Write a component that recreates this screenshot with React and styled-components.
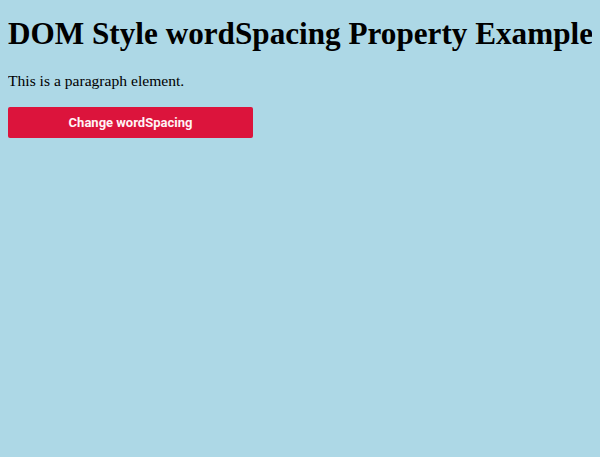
import React from "react";
import styled, { createGlobalStyle } from "styled-components";

const GlobalStyle = createGlobalStyle`
  body {
    margin: 8px;
    background: #add8e6;
    font-family: "Liberation Serif", "Times New Roman", serif;
    color: #000;
  }
`;

const Title = styled.h1`
  font-size: 31.2px;
  font-weight: bold;
  margin: 8px 0 20.4px;
  white-space: nowrap;
`;

const Text = styled.p`
  font-size: 15.6px;
  margin: 0 0 16.3px;
`;

const Button = styled.button`
  display: block;
  width: 245px;
  height: 31px;
  padding: 0;
  border: none;
  border-radius: 2px;
  background: #dc143c;
  color: #fff2f5;
  font-family: Roboto, "Liberation Sans", Arial, sans-serif;
  font-size: 13px;
  font-weight: bold;
  cursor: pointer;
`;

export default function App() {
  return (
    <>
      <GlobalStyle />
      <Title>DOM Style wordSpacing Property Example</Title>
      <Text>This is a paragraph element.</Text>
      <Button>Change wordSpacing</Button>
    </>
  );
}
